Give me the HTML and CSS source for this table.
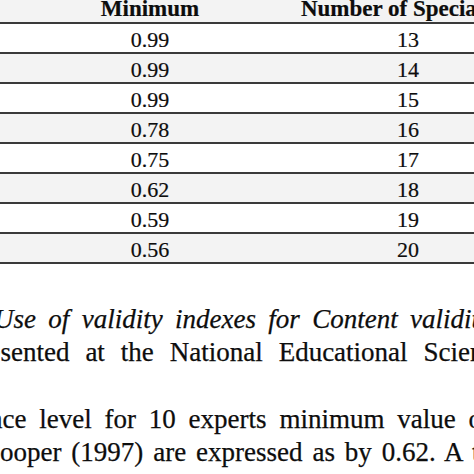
FILE: index.html
```html
<!DOCTYPE html>
<html lang="en">
<head>
<meta charset="utf-8">
<title>Table</title>
<link rel="stylesheet" href="styles.css">
</head>
<body>
<div class="page">
  <div class="table">
    <div class="row head"><div class="cell">Minimum</div><div class="cell">Number of Specialists</div><div class="cell"></div></div>
    <div class="row"><div class="cell">0.99</div><div class="cell">13</div><div class="cell"></div></div>
    <div class="row alt"><div class="cell">0.99</div><div class="cell">14</div><div class="cell"></div></div>
    <div class="row"><div class="cell">0.99</div><div class="cell">15</div><div class="cell"></div></div>
    <div class="row alt"><div class="cell">0.78</div><div class="cell">16</div><div class="cell"></div></div>
    <div class="row"><div class="cell">0.75</div><div class="cell">17</div><div class="cell"></div></div>
    <div class="row alt"><div class="cell">0.62</div><div class="cell">18</div><div class="cell"></div></div>
    <div class="row"><div class="cell">0.59</div><div class="cell">19</div><div class="cell"></div></div>
    <div class="row alt"><div class="cell">0.56</div><div class="cell">20</div><div class="cell"></div></div>
  </div>
  <div class="text">
    <p class="para">
      <span class="line l1"><em>Use of validity indexes for Content validity</em></span>
      <span class="line l2">presented at the National Educational Sciences</span>
    </p>
    <p class="para last">
      <span class="line l3">confidence level for 10 experts minimum value of</span>
      <span class="line l4">Cooper (1997) are expressed as by 0.62. A total</span>
    </p>
  </div>
</div>
</body>
</html>
```
FILE: styles.css
```css
html, body {
  margin: 0;
  padding: 0;
  background: #ffffff;
}
body {
  width: 474px;
  height: 474px;
  overflow: hidden;
  font-family: "Liberation Serif", "Times New Roman", serif;
  color: #0d0d0d;
}
.page {
  width: 474px;
  height: 474px;
  overflow: hidden;
}
.table {
  width: 600px;
  display: flex;
  flex-direction: column;
}
.row {
  display: grid;
  grid-template-columns: 300px 216px 1fr;
  height: 30px;
  box-sizing: border-box;
  border-bottom: 2px solid #3a3a3a;
  background: #ffffff;
}
.row.alt {
  background: #f3f3f3;
}
.row .cell {
  text-align: center;
  font-size: 22px;
  line-height: 25px;
  padding-top: 3px;
  -webkit-text-stroke: 0.2px #0d0d0d;
}
.row.head {
  height: 24px;
  background: #f3f3f3;
}
.row.head .cell {
  font-weight: bold;
  font-size: 23px;
  line-height: 18px;
  padding-top: 0;
  white-space: nowrap;
}
.text {
  padding-top: 39px;
}
.para {
  margin: 0 0 34px 0;
  font-size: 27px;
  line-height: 33px;
  -webkit-text-stroke: 0.25px #0d0d0d;
}
.para.last {
  margin-bottom: 0;
}
.line {
  display: block;
  text-align: justify;
  text-align-last: justify;
}
.l1 { margin-left: -6px; width: 497px; }
.l2 { margin-left: -34px; width: 552px; }
.l3 { margin-left: -92px; width: 583px; }
.l4 { margin-left: -18px; width: 538px; }
```
